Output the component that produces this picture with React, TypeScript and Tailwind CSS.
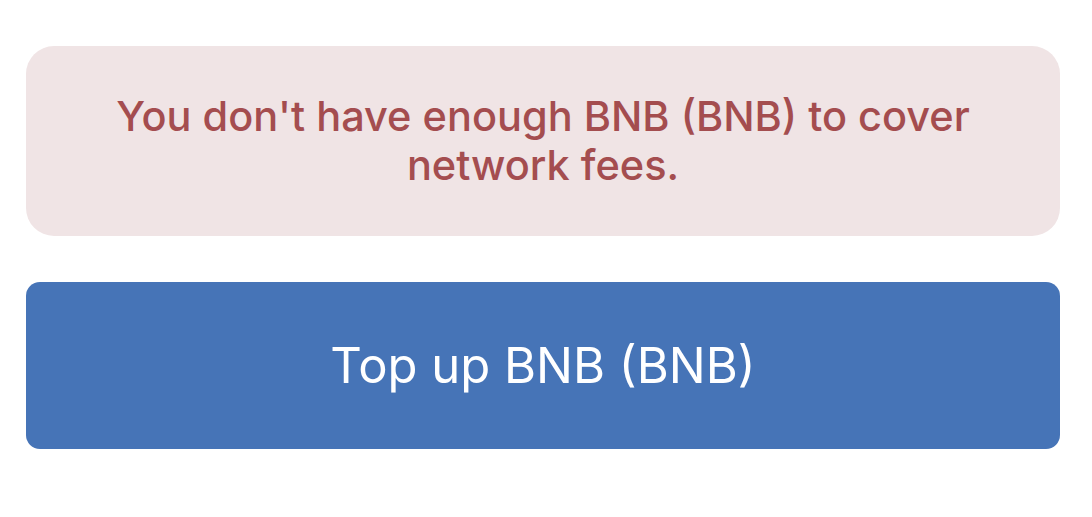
export default function App() {
  return (
    <div className="w-[1092px] h-[517px] bg-white px-[26px] pt-[46px] font-['Inter','Noto_Sans',sans-serif]">
      <div className="h-[190px] w-[1034px] rounded-[28px] bg-[#f0e4e5] flex items-center justify-center px-10">
        <p className="text-center text-[41.5px] leading-[49px] font-medium text-[#a44d4f]">
          You don't have enough BNB (BNB) to cover
          <br />
          network fees.
        </p>
      </div>
      <button className="mt-[46px] h-[167px] w-[1034px] rounded-[14px] bg-[#4674b7] flex items-center justify-center text-white text-[49px]">
        Top up BNB (BNB)
      </button>
    </div>
  );
}
